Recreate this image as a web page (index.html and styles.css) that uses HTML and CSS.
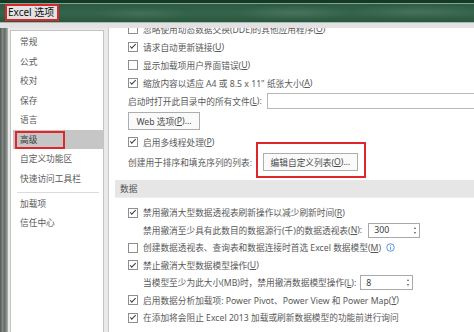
FILE: index.html
```html
<!DOCTYPE html>
<html lang="zh-CN">
<head>
<meta charset="utf-8">
<title>Excel 选项</title>
<link rel="stylesheet" href="styles.css">
</head>
<body>
<div class="titlebar"><div class="title">Excel 选项</div></div>
<div class="band"></div>
<div class="main">
  <div class="edge"></div>
  <nav class="nav">
    <div class="item">常规</div>
    <div class="item">公式</div>
    <div class="item">校对</div>
    <div class="item">保存</div>
    <div class="item">语言</div>
    <div class="item sel">高级<i class="mark"></i></div>
    <div class="item">自定义功能区</div>
    <div class="item">快速访问工具栏</div>
    <div class="sep"></div>
    <div class="item">加载项</div>
    <div class="item">信任中心</div>
  </nav>
  <div class="pane">
    <div class="row first"><span class="cb"></span>忽略使用动态数据交换(DDE)的其他应用程序(<u>O</u>)</div>
    <div class="row"><span class="cb on"></span>请求自动更新链接(<u>U</u>)</div>
    <div class="row"><span class="cb"></span>显示加载项用户界面错误(<u>U</u>)</div>
    <div class="row"><span class="cb on"></span>缩放内容以适应 A4 或 8.5 x 11" 纸张大小(<u>A</u>)</div>
    <div class="row">启动时打开此目录中的所有文件(<u>L</u>):<span class="field"></span></div>
    <div class="row web"><span class="btn web-btn">Web 选项(<u>P</u>)...</span></div>
    <div class="row mt3"><span class="cb on"></span>启用多线程处理(<u>P</u>)</div>
    <div class="row tall">创建用于排序和填充序列的列表:<span class="btnwrap"><span class="btn list-btn">编辑自定义列表(<u>O</u>)...</span><i class="mark2"></i></span></div>
    <div class="section">数据</div>
    <div class="row low mt6"><span class="cb on"></span>禁用撤消大型数据透视表刷新操作以减少刷新时间(<u>R</u>)</div>
    <div class="row low ind">禁用撤消至少具有此数目的数据源行(千)的数据透视表(<u>N</u>):<span class="spin s300"><span class="val">300</span><span class="arrows"><i class="up"></i><i class="dn"></i></span></span></div>
    <div class="row low"><span class="cb"></span>创建数据透视表、查询表和数据连接时首选 Excel 数据模型(<u>M</u>)<svg class="info" viewBox="0 0 10 10" width="9" height="9"><circle cx="5" cy="5" r="4.2" fill="none" stroke="#2f7fd6" stroke-width="0.9"/><circle cx="5" cy="3" r="0.6" fill="#2f7fd6"/><path d="M5 4.4V7.4" stroke="#2f7fd6" stroke-width="0.9"/></svg></div>
    <div class="row low"><span class="cb on"></span>禁止撤消大型数据模型操作(<u>U</u>)</div>
    <div class="row low ind">当模型至少为此大小(MB)时，禁用撤消数据模型操作(<u>L</u>):<span class="spin s8"><span class="val">8</span><span class="arrows"><i class="up"></i><i class="dn"></i></span></span></div>
    <div class="row low"><span class="cb on"></span>启用数据分析加载项: Power Pivot、Power View 和 Power Map(<u>Y</u>)</div>
    <div class="row low"><span class="cb on"></span>在添加将会阻止 Excel 2013 加载或刷新数据模型的功能前进行询问</div>
  </div>
</div>
</body>
</html>
```

FILE: styles.css
```css
html, body {
  margin: 0;
  padding: 0;
}
body {
  width: 474px;
  height: 332px;
  overflow: hidden;
  background: #e9e9e9;
  font-family: "Noto Sans", "Noto Sans CJK SC", sans-serif;
  font-size: 8.7px;
  color: #595959;
}
u { text-decoration-thickness: 0.7px; text-underline-offset: 1px; }

.titlebar {
  height: 23px;
  box-sizing: border-box;
  padding: 4px 0 0 5px;
  background:
    radial-gradient(ellipse 60px 8px at 62% 55%, rgba(255,255,255,0.10), transparent),
    radial-gradient(ellipse 50px 7px at 30% 60%, rgba(255,255,255,0.08), transparent),
    radial-gradient(ellipse 70px 8px at 88% 50%, rgba(255,255,255,0.09), transparent),
    linear-gradient(180deg, #123a24 0, #123a24 3px, #86a393 3px, #86a393 4px, #2c5b42 4px, #346449 13px, #2a583f 22px, #a9b7af 22px, #a9b7af 23px);
}
.title {
  width: 54px;
  height: 17px;
  box-sizing: border-box;
  border: 2px solid #d8262d;
  background: #e3e3e3;
  color: #111;
  font-size: 10px;
  line-height: 13px;
  padding-left: 1px;
  white-space: nowrap;
}
.band {
  height: 5px;
  background: #e2e2e2;
}
.main {
  display: flex;
  height: 304px;
}
.edge {
  width: 8px;
  flex: none;
  background: linear-gradient(90deg, #4f5752, #838985 30%, #646a66 60%, #b0b4b1);
}
.nav {
  width: 94px;
  flex: none;
  box-sizing: border-box;
  margin: 2px 0 0 2px;
  padding: 1px 0 0 2px;
  background: #fff;
  border: 1px solid #c4c4c4;
  border-bottom: none;
}
.item {
  position: relative;
  height: 19.5px;
  display: flex;
  align-items: center;
  padding-left: 7px;
  white-space: nowrap;
}
.sel {
  background: #c6c6c6;
  color: #3a3a3a;
}
.mark {
  position: absolute;
  left: 2px;
  top: 1px;
  width: 50px;
  height: 18px;
  box-sizing: border-box;
  border: 2px solid #e0262b;
}
.sep {
  height: 1px;
  background: #dcdcdc;
  margin: 3.5px 4px 1px 4px;
}
.pane {
  flex: 1;
  margin-left: 4px;
  padding-left: 6px;
  background: #fff;
  border-left: 1px solid #c8c8c8;
  overflow: hidden;
}
.row {
  height: 18px;
  display: flex;
  align-items: center;
  padding-left: 13px;
  white-space: nowrap;
}
.first { margin-top: -8px; }
.web { margin-top: 2px; }
.mt3 { margin-top: 3px; }
.mt6 { margin-top: 6px; }
.tall { height: 22px; }
.low { height: 17.5px; }
.ind { padding-left: 28px; }

.cb {
  width: 10px;
  height: 10px;
  flex: none;
  box-sizing: border-box;
  border: 1px solid #8e8e8e;
  background: #fff;
  margin-right: 5px;
  display: flex;
  align-items: center;
  justify-content: center;
}
.cb.on::after {
  content: "";
  width: 5px;
  height: 2.4px;
  margin-top: -2px;
  border-left: 1.2px solid #3a3a3a;
  border-bottom: 1.2px solid #3a3a3a;
  transform: rotate(-45deg);
}
.field {
  flex: 1;
  height: 14px;
  margin: 0 -20px 0 5px;
  border: 1px solid #b8b8b8;
  background: #fff;
}
.btn {
  height: 18px;
  box-sizing: border-box;
  border: 1px solid #adadad;
  background: #fafafa;
  display: flex;
  align-items: center;
  justify-content: center;
  color: #4a4a4a;
}
.web-btn { width: 72px; }
.btnwrap {
  position: relative;
  margin-left: 11px;
}
.list-btn { width: 95px; }
.mark2 {
  position: absolute;
  left: -7px;
  top: -11px;
  width: 110px;
  height: 36px;
  box-sizing: border-box;
  border: 2px solid #e0262b;
}
.section {
  margin-top: 7px;
  height: 18px;
  display: flex;
  align-items: center;
  padding-left: 5px;
  background: #e6e6e6;
  border-bottom: 1px solid #eeeeee;
  box-sizing: border-box;
  color: #555;
}
.spin {
  height: 15px;
  box-sizing: border-box;
  border: 1px solid #a9a9a9;
  background: #fff;
  display: flex;
  align-items: center;
  padding-left: 5px;
  margin-left: 6px;
  color: #3a3a3a;
}
.s300 { width: 52px; }
.s8 { width: 53px; margin-left: 4px; }
.val { flex: 1; }
.arrows {
  width: 8px;
  display: flex;
  flex-direction: column;
  align-items: center;
  gap: 3px;
}
.up, .dn {
  width: 0;
  height: 0;
  border-left: 1.5px solid transparent;
  border-right: 1.5px solid transparent;
}
.up { border-bottom: 2px solid #555; }
.dn { border-top: 2px solid #555; }
.info {
  margin-left: 5px;
  flex: none;
}
```
